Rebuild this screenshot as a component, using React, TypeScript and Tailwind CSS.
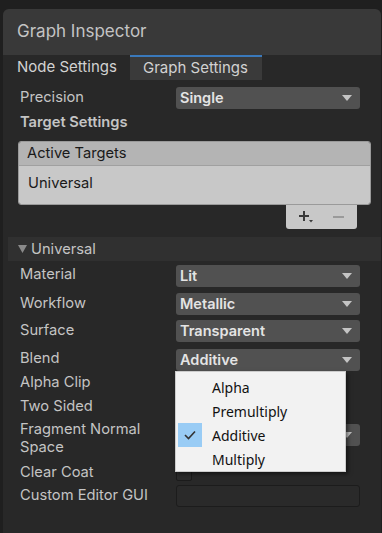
import React from "react";

const FONT = { fontFamily: "Inter, 'Noto Sans', sans-serif" };

function Caret() {
  return (
    <svg width="10" height="6" viewBox="0 0 10 6" className="shrink-0">
      <path d="M0 0 H10 L5 6 Z" fill="#c4c4c4" />
    </svg>
  );
}

function Dropdown({ value }: { value?: string }) {
  return (
    <div className="flex h-[22px] w-[184px] items-center justify-between rounded-[3px] bg-[#515151] pl-[4px] pr-[8px]">
      <span className="text-[14.5px] font-semibold text-[#e4e4e4]">{value}</span>
      <Caret />
    </div>
  );
}

function Row({
  label,
  children,
  className = "",
}: {
  label: React.ReactNode;
  children?: React.ReactNode;
  className?: string;
}) {
  return (
    <div className={`flex items-center ${className}`}>
      <div className="w-[173px] shrink-0 pb-[3px] pl-[17px] text-[14.7px] leading-[18px] text-[#c4c4c4]">
        {label}
      </div>
      {children}
    </div>
  );
}

const blendOptions = ["Alpha", "Premultiply", "Additive", "Multiply"];

export default function App() {
  return (
    <div
      className="relative h-[533px] w-[382px] overflow-hidden bg-[#1f1f1f] pl-[3px] pr-[1px] pt-[9px]"
      style={FONT}
    >
      <div className="flex h-full flex-col overflow-hidden rounded-t-[6px] bg-[#282828]">
        {/* header */}
        <div className="flex h-[46px] items-center bg-[#393939] pl-[14px] text-[17px] text-[#c4c4c4]">
          Graph Inspector
        </div>

        {/* tabs */}
        <div className="flex h-[25px] bg-[#282828] text-[15px] text-[#d2d2d2]">
          <div className="flex w-[127px] items-center pl-[14px]">Node Settings</div>
          <div className="flex w-[132px] items-center border-t-2 border-[#3a79bb] bg-[#3a3a3a] pl-[13px]">
            Graph Settings
          </div>
        </div>

        {/* graph settings */}
        <Row label="Precision" className="mt-[7px] h-[22px]">
          <Dropdown value="Single" />
        </Row>
        <div className="mt-[4px] pl-[17px] text-[14.7px] font-semibold leading-[18px] text-[#c4c4c4]">
          Target Settings
        </div>

        <div className="ml-[15px] mr-[10px] mt-[10px] overflow-hidden rounded-[3px] border border-[#9a9a9a]">
          <div className="flex h-[24px] items-center border-b border-[#a0a0a0] bg-[#b4b4b4] pl-[8px] text-[14.7px] text-[#1a1a1a]">
            Active Targets
          </div>
          <div className="h-[38px] bg-[#c8c8c8] pl-[9px] pt-[6px] text-[14.7px] text-[#1a1a1a]">
            Universal
          </div>
        </div>
        <div className="ml-[283px] flex h-[24px] w-[71px] items-center gap-[18px] rounded-b-[3px] bg-[#c8c8c8] pl-[13px]">
          <svg width="16" height="14" viewBox="0 0 16 14">
            <path d="M5 1 V11 M0 6 H10" stroke="#3a3a3a" strokeWidth="2" />
            <path d="M10 10 H14 L12 12.5 Z" fill="#3a3a3a" />
          </svg>
          <svg width="12" height="4" viewBox="0 0 12 4">
            <path d="M0 2 H11" stroke="#9a9a9a" strokeWidth="2" />
          </svg>
        </div>

        {/* universal foldout */}
        <div className="mt-[8px] ml-[5px] flex h-[24px] items-center bg-[#303030] pl-[10px] text-[14.7px] text-[#c4c4c4]">
          <svg width="10" height="8" viewBox="0 0 10 8" className="mr-[3px]">
            <path d="M0 0 H9 L4.5 8 Z" fill="#8a8a8a" />
          </svg>
          Universal
        </div>

        <Row label="Material" className="mt-[3px] h-[23px]">
          <Dropdown value="Lit" />
        </Row>
        <Row label="Workflow" className="mt-[6px] h-[22px]">
          <Dropdown value="Metallic" />
        </Row>
        <Row label="Surface" className="mt-[5px] h-[22px]">
          <Dropdown value="Transparent" />
        </Row>
        <Row label="Blend" className="mt-[6px] h-[23px]">
          <Dropdown value="Additive" />
        </Row>
        <Row label="Alpha Clip" className="mt-[1px] h-[22px]" />
        <Row label="Two Sided" className="mt-[2px] h-[22px]" />
        <Row
          label={
            <>
              Fragment Normal
              <br />
              Space
            </>
          }
          className="mt-[3px] h-[36px]"
        >
          <div className="-mt-[8px]">
            <Dropdown />
          </div>
        </Row>
        <Row label="Clear Coat" className="mt-[6px] h-[20px]">
          <div className="h-[16px] w-[16px] rounded-[2px] border border-[#1b1b1b] bg-[#2b2b2b]" />
        </Row>
        <Row label="Custom Editor GUI" className="mt-[2px] h-[22px]">
          <div className="h-[22px] w-[184px] rounded-[3px] border border-[#1c1c1c] bg-[#2a2a2a]" />
        </Row>
      </div>

      {/* blend popup */}
      <div
        className="absolute left-[175px] top-[371px] w-[171px] border border-[#cccccc] bg-[#f2f2f2] pt-[3px] shadow-[2px_2px_4px_rgba(0,0,0,0.5)]"
        style={{ fontFamily: "'Noto Sans', 'Open Sans', sans-serif" }}
      >
        {blendOptions.map((o) => (
          <div key={o} className="flex h-[24px] items-center">
            <div
              className={`ml-[2px] flex h-[24px] w-[24px] items-center justify-center ${
                o === "Additive" ? "bg-[#99ccf5]" : ""
              }`}
            >
              {o === "Additive" && (
                <svg width="12" height="10" viewBox="0 0 12 10">
                  <path d="M1 5 L4.5 8.5 L11 1.5" stroke="#333" strokeWidth="1.6" fill="none" />
                </svg>
              )}
            </div>
            <span className="ml-[10px] text-[14px] text-[#111]">{o}</span>
          </div>
        ))}
      </div>
    </div>
  );
}
